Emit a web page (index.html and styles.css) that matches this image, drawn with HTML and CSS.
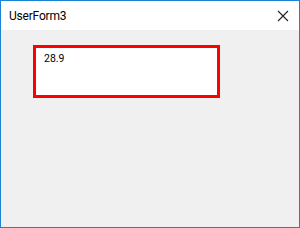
FILE: index.html
```html
<!DOCTYPE html>
<html>
<head>
<meta charset="utf-8">
<link rel="stylesheet" href="styles.css">
</head>
<body>
<div class="window">
  <div class="titlebar">
    <span class="title">UserForm3</span>
    <svg class="close" width="12" height="12" viewBox="0 0 12 12"><path d="M1 1L11 11M11 1L1 11" stroke="#222" stroke-width="1.1" fill="none"/></svg>
  </div>
  <div class="client">
    <div class="textbox">28.9</div>
  </div>
</div>
</body>
</html>
```
FILE: styles.css
```css
html, body { margin: 0; padding: 0; }
body { width: 300px; height: 228px; overflow: hidden; font-family: Roboto, "Noto Sans", sans-serif; }
.window {
  box-sizing: border-box;
  width: 300px; height: 228px;
  border: 1px solid #1883d7;
  display: flex; flex-direction: column;
  background: #f0f0f0;
}
.titlebar {
  height: 29px;
  background: #fff;
  display: flex; align-items: center; justify-content: space-between;
  padding: 0 10px 0 8px;
}
.title { font-size: 12px; color: #000; letter-spacing: -0.2px; }
.close { display: block; }
.client { flex: 1; padding: 15px 0 0 32px; }
.textbox {
  box-sizing: border-box;
  width: 187px; height: 53px;
  border: 3px solid #ff0000;
  background: #fff;
  font-size: 10.5px;
  color: #000;
  padding: 4px 0 0 8px;
  line-height: 13px;
}
```
